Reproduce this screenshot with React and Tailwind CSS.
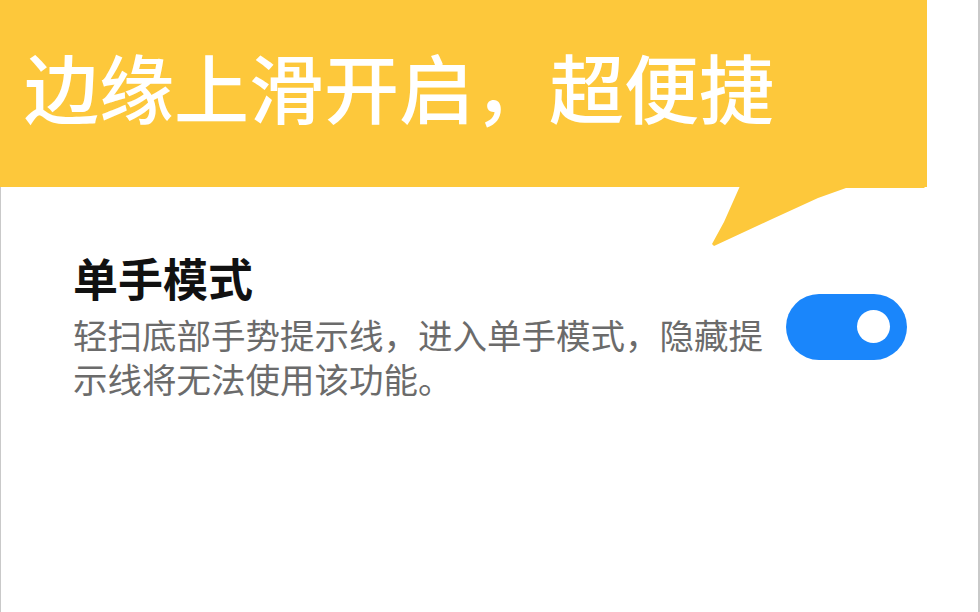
import React from 'react';

const cjk = { fontFamily: '"Noto Sans CJK SC", "Noto Sans", sans-serif' };

function Toggle() {
  return (
    <div className="flex h-[66px] w-[121px] shrink-0 items-center justify-end rounded-full bg-[#1a86fb] pr-[17px]">
      <div className="h-[33px] w-[33px] rounded-full bg-white" />
    </div>
  );
}

export default function App() {
  return (
    <div className="relative h-[612px] w-[980px] overflow-hidden border-r-2 border-[#c9c9c9] bg-white" style={cjk}>
      <div className="h-[187px] w-[927px] bg-[#fdc83b] pl-[24px] pt-[48px]">
        <h1 className="text-[75px] font-medium leading-none text-white">边缘上滑开启，超便捷</h1>
      </div>
      <svg className="absolute left-[700px] top-[186px]" width="230" height="62" viewBox="0 0 230 62">
        <path d="M40 0 L226 0 L224 2 L146 2 L118 12 L70 34 L14 60 L12 58 L24 36 Z" fill="#fdc83b" />
      </svg>

      <div className="h-[425px] border-l border-[#c9c9c9]">
        <div className="flex items-center justify-between pl-[72px] pr-[71px] pt-[66px]">
          <div className="w-[700px]">
            <div className="text-[45px] font-bold leading-[50px] text-[#111]">单手模式</div>
            <p className="mt-[9px] text-[34.5px] leading-[44px] text-[#6b6b6b]">
              轻扫底部手势提示线，进入单手模式，隐藏提示线将无法使用该功能。
            </p>
          </div>
          <Toggle />
        </div>
      </div>
    </div>
  );
}
